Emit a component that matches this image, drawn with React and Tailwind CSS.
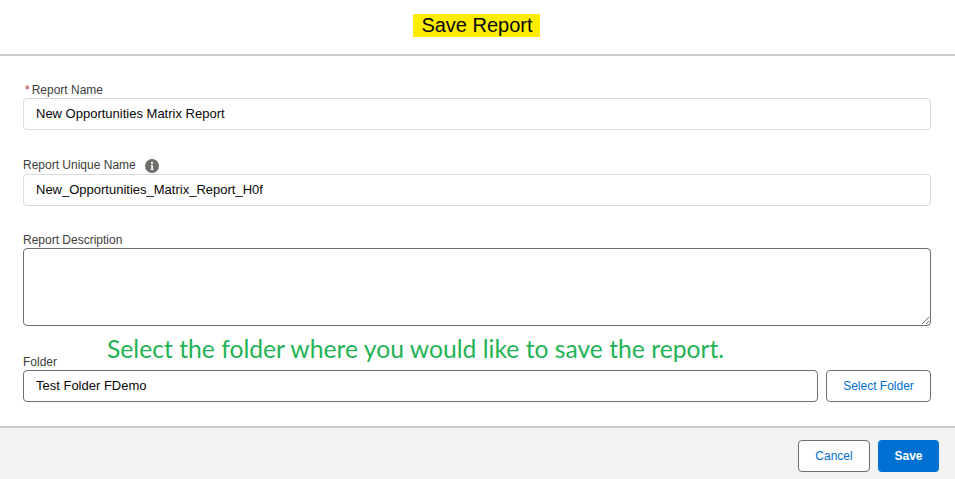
const labelCls = 'block text-xs leading-4 text-[#3e3e3c]';
const inputCls = 'block w-full h-8 rounded border bg-white px-3 text-[13px] leading-[30px] text-[#080707]';

const InfoIcon = () => (
  <svg viewBox="0 0 14 14" className="w-[14px] h-[14px] mt-[3px]">
    <circle cx="7" cy="7" r="7" fill="#706e6b" />
    <circle cx="7" cy="3.9" r="1.1" fill="#fff" />
    <path d="M5.8 6h2.1v4.1h.6v1H5.6v-1h.7V7h-.5z" fill="#fff" />
  </svg>
);

const App = () => {
  return (
    <div className="w-[955px] h-[479px] flex flex-col bg-white overflow-hidden font-['Liberation_Sans',Arial,sans-serif]">
      <header className="h-[56px] shrink-0 border-b-2 border-[#c9c9c9] pt-[14px] flex justify-center">
        <h1 className="h-[23px] w-[127px] -translate-x-[1px] bg-[#ffed00] pl-[1px] text-center text-xl leading-[23px] text-[#080707]">
          Save Report
        </h1>
      </header>

      <main className="flex-1 pl-[23px] pr-[24px] pt-[26px]">
        <label className={labelCls}>
          <span className="text-[#c23934] mx-[2px]">*</span>Report Name
        </label>
        <div className={`${inputCls} border-[#dddbda]`}>New Opportunities Matrix Report</div>

        <label className={`${labelCls} mt-[26px] mb-[1px] flex items-center gap-[9px]`}>
          Report Unique Name
          <InfoIcon />
        </label>
        <div className={`${inputCls} border-[#dddbda]`}>New_Opportunities_Matrix_Report_H0f</div>

        <label className={`${labelCls} mt-[26px]`}>Report Description</label>
        <textarea className="block w-full h-[78px] rounded border border-[#706e6b] bg-white" />

        <div className="relative mt-[28px]">
          <label className={labelCls}>Folder</label>
          <p className="absolute left-[84px] -top-[21px] text-[24.7px] leading-8 whitespace-nowrap text-[#1fb356] font-['Lato',sans-serif]">
            Select the folder where you would like to save the report.
          </p>
          <div className="flex gap-2">
            <div className={`${inputCls} flex-1 border-[#706e6b]`}>Test Folder FDemo</div>
            <button className="w-[105px] h-8 rounded border border-[#706e6b] bg-white text-xs text-[#0070d2]">
              Select Folder
            </button>
          </div>
        </div>
      </main>

      <footer className="h-[53px] shrink-0 border-t-2 border-[#c9c9c9] bg-[#f3f3f3] pt-[12px] pr-[16px] flex justify-end gap-2">
        <button className="w-[72px] h-8 rounded border border-[#706e6b] bg-white text-xs text-[#0070d2]">
          Cancel
        </button>
        <button className="w-[61px] h-8 rounded bg-[#0070d2] text-xs font-bold text-white">Save</button>
      </footer>
    </div>
  );
};

export default App;
